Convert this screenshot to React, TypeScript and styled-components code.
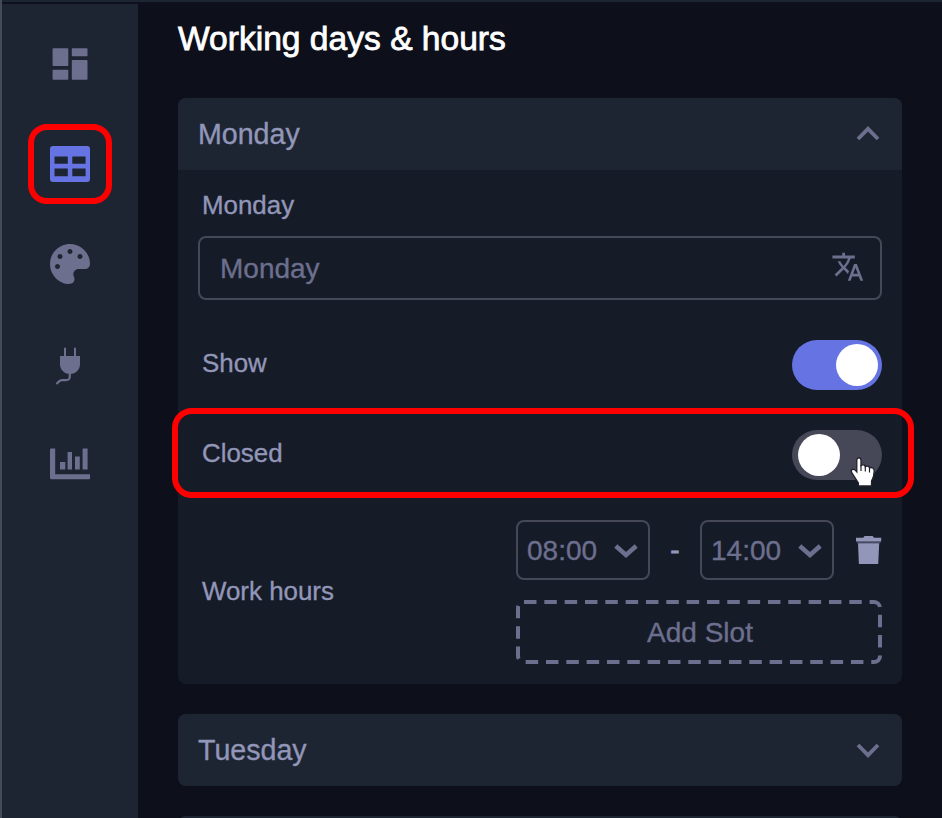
import React from "react";
import styled, { createGlobalStyle, css } from "styled-components";
import { FaPalette } from "react-icons/fa";
import { MdTranslate } from "react-icons/md";

const color = {
  page: "#0d0f1b",
  surface: "#1e2532",
  body: "#161b28",
  line: "#464858",
  muted: "#6c6f8d",
  label: "#9296b8",
  accent: "#6674e3",
  marker: "#ff0000",
};

const GlobalStyle = createGlobalStyle`
  *, *::before, *::after { box-sizing: border-box; }
  body {
    margin: 0;
    overflow: hidden;
    background: ${color.page};
    font-family: "Liberation Sans", Arial, Helvetica, sans-serif;
    -webkit-text-stroke: 0.35px currentColor;
  }
`;

const Shell = styled.div`
  display: flex;
  flex-direction: column;
  width: 942px;
  height: 818px;
  overflow: hidden;
  background: ${color.page};
  border-left: 2px solid #454a59;
`;

const TopEdge = styled.div`
  flex: none;
  height: 4px;
  background: ${color.surface};
  border-bottom: 2px solid #0e111c;
`;

const Columns = styled.div`
  flex: 1;
  min-height: 0;
  display: flex;
`;

const Sidebar = styled.nav`
  flex: none;
  width: 136px;
  padding-top: 10px;
  display: flex;
  flex-direction: column;
  align-items: center;
  background: ${color.surface};
`;

const NavItem = styled.a<{ $active?: boolean }>`
  position: relative;
  width: 84px;
  height: 100px;
  display: flex;
  align-items: center;
  justify-content: center;
  color: ${(p) => (p.$active ? color.accent : color.muted)};

  svg {
    display: block;
  }
`;

const NavMarker = styled.span`
  position: absolute;
  inset: 10px 0;
  border: 6px solid ${color.marker};
  border-radius: 19px;
`;

const Main = styled.main`
  flex: 1;
  min-width: 0;
  padding: 0 40px;
`;

const Title = styled.h1`
  margin: 0;
  height: 94px;
  padding-top: 15px;
  font-size: 33.6px;
  font-weight: 400;
  line-height: 40px;
  color: #fff;
  -webkit-text-stroke: 0.8px #fff;
  white-space: nowrap;
`;

const DayList = styled.div`
  display: flex;
  flex-direction: column;
  gap: 30px;
`;

const DayCard = styled.section`
  border-radius: 8px;
  background: ${color.body};
`;

const DayHeader = styled.header<{ $open?: boolean }>`
  height: 72px;
  padding: 0 21px 0 20px;
  display: flex;
  align-items: center;
  justify-content: space-between;
  border-radius: ${(p) => (p.$open ? "8px 8px 0 0" : "8px")};
  background: ${color.surface};
  color: ${color.label};
  font-size: 28.6px;
  line-height: 32px;
`;

const DayBody = styled.div`
  padding: 0 20px 20px;
`;

const textLabel = css`
  color: ${color.label};
  font-size: 25.9px;
  line-height: 30px;
  padding-left: 4px;
`;

const FieldLabel = styled.label`
  ${textLabel}
  display: block;
  height: 66px;
  padding-top: 20px;
`;

const RowLabel = styled.span`
  ${textLabel}
  padding-bottom: 4px;
`;

const HoursLabel = styled(RowLabel)`
  padding-bottom: 2px;
`;

const Field = styled.div`
  height: 64px;
  margin-bottom: 20px;
  padding: 2px 15px 0 20px;
  display: flex;
  align-items: center;
  justify-content: space-between;
  border: 2px solid ${color.line};
  border-radius: 8px;
  color: ${color.muted};
  font-size: 28px;

  svg {
    display: block;
    margin-top: -5px;
  }
`;

const SettingRow = styled.div`
  position: relative;
  height: 90px;
  display: flex;
  align-items: center;
  justify-content: space-between;
`;

const RowMarker = styled.span`
  position: absolute;
  inset: -2px -32px 2px -26px;
  border: 6px solid ${color.marker};
  border-radius: 20px;
`;

const Toggle = styled.span<{ $on?: boolean }>`
  width: 90px;
  height: 50px;
  padding: ${(p) => (p.$on ? "0 4px 0 0" : "0 0 0 6px")};
  display: flex;
  align-items: center;
  justify-content: ${(p) => (p.$on ? "flex-end" : "flex-start")};
  border-radius: 25px;
  background: ${(p) => (p.$on ? color.accent : color.line)};
`;

const Knob = styled.span`
  width: 42px;
  height: 42px;
  border-radius: 50%;
  background: #fff;
`;

const Pointer = styled.svg`
  position: absolute;
  right: 6px;
  top: 46px;
  width: 26px;
  height: 32px;
`;

const HoursRow = styled.div`
  display: flex;
  align-items: center;
  justify-content: space-between;
  padding-top: 20px;
`;

const Slots = styled.div`
  width: 366px;
  display: flex;
  flex-direction: column;
  gap: 20px;
`;

const Slot = styled.div`
  display: flex;
  align-items: center;
  height: 60px;
`;

const TimeSelect = styled.div`
  width: 134px;
  height: 60px;
  padding: 2px 9px 0 9px;
  display: flex;
  align-items: center;
  justify-content: space-between;
  border: 2px solid ${color.line};
  border-radius: 8px;
  color: ${color.muted};
  font-size: 28px;
`;

const Dash = styled.span`
  width: 50px;
  text-align: center;
  color: ${color.label};
  font-size: 28px;
  -webkit-text-stroke-width: 0.8px;
`;

const RemoveButton = styled.span`
  margin-left: auto;
  display: flex;
  color: ${color.label};
`;

const AddSlot = styled.div`
  position: relative;
  height: 64px;
  padding: 2px 0 0 2px;
  display: flex;
  align-items: center;
  justify-content: center;
  color: ${color.muted};
  font-size: 28px;
`;

const DashedOutline = styled.svg`
  position: absolute;
  inset: 0;
  width: 366px;
  height: 64px;
`;

const DashboardIcon = () => (
  <svg width="36" height="32" viewBox="0 0 36 32" fill="currentColor">
    <rect x="0.6" y="0.3" width="15.7" height="17.7" rx="0.8" />
    <rect x="0.6" y="21.8" width="15.7" height="9.9" rx="0.8" />
    <rect x="19.8" y="0.3" width="15.7" height="8" rx="0.8" />
    <rect x="19.8" y="12" width="15.7" height="19.7" rx="0.8" />
  </svg>
);

const TableIcon = () => (
  <svg width="40" height="36" viewBox="0 0 40 36" fill="currentColor">
    <path
      fillRule="evenodd"
      d="M3 0h34a3 3 0 0 1 3 3v30a3 3 0 0 1-3 3H3a3 3 0 0 1-3-3V3a3 3 0 0 1 3-3ZM4.5 10.5v7.3h13.3v-7.3ZM22.3 10.5v7.3h13.3v-7.3ZM4.5 22.4v7.8h13.3v-7.8ZM22.3 22.4v7.8h13.3v-7.8Z"
    />
  </svg>
);

const PlugIcon = () => (
  <svg width="28" height="42" viewBox="0 0 28 42" fill="currentColor">
    <path d="M8 4.800h2v8.500H8ZM18 4.800h2v8.500h-2ZM4 13h20v8c0 5.500-4 10-10 10S4 26.500 4 21Z" />
    <path
      d="M13.800 30v3c0 3.200-1 4.100-3.900 4.100H6c-2.400 0-3.600 1.400-5.500 4"
      fill="none"
      stroke="currentColor"
      strokeWidth="2.200"
    />
  </svg>
);

const ChartIcon = () => (
  <svg width="40" height="32" viewBox="0 0 40 32" fill="currentColor">
    <path d="M1 0.600h4.200v25.700H40v4.200a.8.8 0 0 1-.8.800H1.500A1.500 1.500 0 0 1 0 29.800V1.600a1 1 0 0 1 1-1Z" />
    <path d="M10 14h5.300v7.600H10ZM17.600 4h4.400v17.600h-4.400ZM25 8.500h4.800v13.100H25ZM32.600 0.600h5v21h-5Z" />
  </svg>
);

const chevronPaths = {
  up: "M3 14 13 3.800 23 14",
  down: "M3 4 13 14.200 23 4",
  select: "M2.800 4 13 13 23.200 4",
};

const Chevron = ({ kind }: { kind: keyof typeof chevronPaths }) => (
  <svg
    width="26"
    height="18"
    viewBox="0 0 26 18"
    fill="none"
    stroke={color.muted}
    strokeWidth={kind === "select" ? 4.6 : 3.8}
  >
    <path d={chevronPaths[kind]} />
  </svg>
);

const TrashIcon = () => (
  <svg width="26" height="28" viewBox="0 0 26 28" fill="currentColor">
    <path d="M0 1.800h7.200L8.600 0h8l1.400 1.800h7.200v3.800H0Z" />
    <path d="M1 5.600h23.400v1.700H1Z" opacity=".4" />
    <path d="M2 7.300h21.200L22.200 28H2.900Z" />
  </svg>
);

const HandPointer = () => (
  <Pointer viewBox="0 0 26 32">
    <path
      d="M6.800 4.200c0-3 4.200-3 4.200 0v5.300c1.500-1.200 3.800-.6 4.300 1.100 1.600-1.100 3.700-.5 4.200 1.200 2.200-.9 4.700.4 4.700 3 0 4.300-.6 6.900-2.700 10.200V30H8.400v-3L3 18.600C1.700 16.700.6 15.300 1.600 14c1.200-1.500 3.200-.7 5.200 1.800Z"
      fill="#fff"
      stroke="#20212a"
      strokeWidth="1.300"
    />
    <path d="M11 9v6M15.300 10.600v5M19.500 11.800v4.600" fill="none" stroke="#20212a" strokeWidth="1.200" />
  </Pointer>
);

const days = { open: "Monday", next: "Tuesday" };

export default function App() {
  return (
    <>
      <GlobalStyle />
      <Shell>
        <TopEdge />
        <Columns>
          <Sidebar>
            <NavItem><DashboardIcon /></NavItem>
            <NavItem $active>
              <TableIcon />
              <NavMarker />
            </NavItem>
            <NavItem><FaPalette size={40} /></NavItem>
            <NavItem><PlugIcon /></NavItem>
            <NavItem><ChartIcon /></NavItem>
          </Sidebar>
          <Main>
            <Title>Working days &amp; hours</Title>
            <DayList>
              <DayCard>
                <DayHeader $open>
                  {days.open}
                  <Chevron kind="up" />
                </DayHeader>
                <DayBody>
                  <FieldLabel>{days.open}</FieldLabel>
                  <Field>
                    {days.open}
                    <MdTranslate size={33.6} />
                  </Field>
                  <SettingRow>
                    <RowLabel>Show</RowLabel>
                    <Toggle $on><Knob /></Toggle>
                  </SettingRow>
                  <SettingRow>
                    <RowLabel>Closed</RowLabel>
                    <Toggle><Knob /></Toggle>
                    <RowMarker />
                    <HandPointer />
                  </SettingRow>
                  <HoursRow>
                    <HoursLabel>Work hours</HoursLabel>
                    <Slots>
                      <Slot>
                        <TimeSelect>
                          08:00
                          <Chevron kind="select" />
                        </TimeSelect>
                        <Dash>-</Dash>
                        <TimeSelect>
                          14:00
                          <Chevron kind="select" />
                        </TimeSelect>
                        <RemoveButton><TrashIcon /></RemoveButton>
                      </Slot>
                      <AddSlot>
                        <DashedOutline viewBox="0 0 366 64">
                          <rect
                            x="2"
                            y="2"
                            width="362"
                            height="60"
                            rx="6"
                            fill="none"
                            stroke={color.muted}
                            strokeWidth="4"
                            strokeDasharray="12.5 7.830"
                          />
                        </DashedOutline>
                        Add Slot
                      </AddSlot>
                    </Slots>
                  </HoursRow>
                </DayBody>
              </DayCard>
              <DayCard>
                <DayHeader>
                  {days.next}
                  <Chevron kind="down" />
                </DayHeader>
              </DayCard>
              <DayCard>
                <DayHeader />
              </DayCard>
            </DayList>
          </Main>
        </Columns>
      </Shell>
    </>
  );
}
